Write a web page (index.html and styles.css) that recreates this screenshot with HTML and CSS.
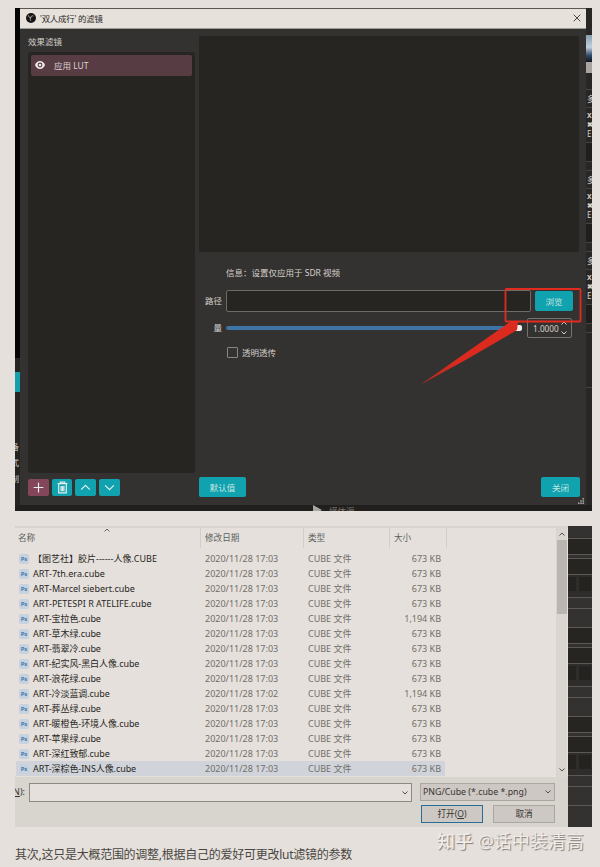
FILE: index.html
```
<!DOCTYPE html>
<html lang="zh-CN">
<head>
<meta charset="utf-8">
<title>滤镜</title>
<link rel="stylesheet" href="styles.css">
</head>
<body>
<main class="page">
  <section class="shot shot-obs">
    <div class="edge-left">
      <div class="edge-black"></div>
      <div class="edge-teal"></div>
      <div class="edge-words"><span>备</span><span>式</span><span>制</span></div>
    </div>
    <div class="window">
      <header class="titlebar">
        <svg class="logo" viewBox="0 0 20 20"><circle cx="10" cy="10" r="10" fill="#171615"/><g fill="none" stroke="#bdb8b2" stroke-width="1.700"><path d="M5 4.500c0 3.500 2 5 5 4.500 0-3 2-4 5-3"/><path d="M10 9c-2 2-2 4-.5 6.500"/></g></svg>
        <span class="title">'双人成行' 的滤镜</span>
        <svg class="close" viewBox="0 0 8 8"><path d="M.7.7l6.600 6.600M7.300.7L.7 7.300"/></svg>
      </header>
      <div class="body">
        <aside class="left">
          <div class="heading">效果滤镜</div>
          <div class="list">
            <div class="item">
              <svg class="eye" viewBox="0 0 20 16"><path d="M0 8C4-2.500 16-2.500 20 8 16 18.500 4 18.500 0 8z" fill="#f0e8e6"/><circle cx="10" cy="8" r="4.800" fill="#573d43"/><circle cx="10" cy="8" r="2.600" fill="#f0e8e6"/></svg>
              <span>应用 LUT</span>
            </div>
          </div>
          <div class="tools">
            <div class="tool add"><svg viewBox="0 0 12 12"><path d="M6 1.500v9M1.500 6h9"/></svg></div>
            <div class="tool"><svg viewBox="0 0 12 12"><path d="M1.500 2.500h9M4 2V1h4v1M2.500 3v8h7V3M4.700 4.500v5M6 4.500v5M7.300 4.500v5"/></svg></div>
            <div class="tool"><svg viewBox="0 0 12 12"><path d="M2 8l4-4 4 4"/></svg></div>
            <div class="tool"><svg viewBox="0 0 12 12"><path d="M2 4l4 4 4-4"/></svg></div>
          </div>
        </aside>
        <div class="right">
          <div class="preview"></div>
          <div class="info">信息：设置仅应用于 SDR 视频</div>
          <div class="row path"><label>路径</label><div class="field"></div><div class="btn browse">浏览</div></div>
          <div class="row amount"><label>量</label><div class="slider"><i></i></div><div class="spin"><span>1.0000</span><svg viewBox="0 0 6 14"><path d="M.5 3.500L3 1l2.500 2.500M.5 10.500L3 13l2.500-2.500"/></svg></div></div>
          <div class="check"><i></i><span>透明透传</span></div>
          <div class="actions"><div class="btn">默认值</div><div class="btn end">关闭</div></div>
        </div>
      </div>
      <svg class="grip" viewBox="0 0 6 6"><path d="M4.500 0H6v1.500H4.500zM2.300 2.200h1.500v1.500H2.300zM4.500 2.200H6v1.500H4.500zM0 4.500h1.500V6H0zM2.300 4.500h1.500V6H2.300zM4.500 4.500H6V6H4.500z" fill="#aaa7a2"/></svg>
    </div>
    <div class="edge-right">
      <div class="thumb"></div><div class="scrap"></div>
      <div class="meter"><span>多</span><b>X</b><b>✖</b><span>E</span></div>
      <div class="meter"><span>多</span><b>X</b><b>✖</b><span>E</span></div>
      <div class="meter"><span>多</span><b>X</b><b>✖</b><span>E</span></div>
      <div class="meter last"></div>
    </div>
    <div class="edge-bottom"><i></i><span>媒体源</span></div>
    <svg class="mark" viewBox="0 0 577 503"><defs><linearGradient id="fade" x1="0" y1="1" x2="1" y2="0"><stop offset="0" stop-color="#a52c20"/><stop offset=".35" stop-color="#dc2a1f"/></linearGradient></defs><rect x="490.500" y="281" width="75" height="32.500" rx="1" fill="none" stroke="#e12a20" stroke-width="1.800"/><path d="M405 377Q452 344 495 314h8l-1 8Q455 350 405 377z" fill="url(#fade)"/></svg>
  </section>

  <section class="shot shot-files">
    <div class="dialog">
      <div class="files">
        <div class="table">
          <div class="head"><span>名称</span><span>修改日期</span><span>类型</span><span>大小</span><span></span><svg class="sort" viewBox="0 0 6 4"><path d="M.5 3.500L3 1l2.500 2.500"/></svg></div>
          <div class="rows" id="rows"></div>
        </div>
        <div class="scroll"><svg viewBox="0 0 8 6"><path d="M1.500 4.500L4 2l2.500 2.500"/></svg><i></i><svg viewBox="0 0 8 6"><path d="M1.500 1.500L4 4l2.500-2.500"/></svg></div>
      </div>
      <footer class="foot">
        <div class="name-row"><div class="n"><span><u>N</u>):</span></div><div class="input"><svg viewBox="0 0 8 6"><path d="M1.500 1.500L4 4l2.500-2.500"/></svg></div><div class="combo"><span>PNG/Cube (*.cube *.png)</span><svg viewBox="0 0 8 6"><path d="M1.500 1.500L4 4l2.500-2.500"/></svg></div></div>
        <div class="btn-row"><div class="wbtn primary">打开(<u>O</u>)</div><div class="wbtn">取消</div></div>
      </footer>
    </div>
    <div class="strip"><div class="unit"><i></i></div><div class="unit"><i></i></div><div class="unit"><i></i></div><div class="tail"></div></div>
  </section>
  <p class="caption">其次,这只是大概范围的调整,根据自己的爱好可更改lut滤镜的参数</p>
  <div class="watermark"><b>知乎</b> @话中装清高</div>
</main>
<script src="files.js"></script>
</body>
</html>
```
FILE: styles.css
```
* { box-sizing: border-box; }
body { margin: 0; background: #e5e0db; font-family: "Noto Sans", "Noto Sans CJK SC", sans-serif; }
svg { display: block; fill: none; }
.page { position: relative; width: 600px; height: 867px; padding: 8px 8px 0 15px; overflow: hidden; }
.shot { width: 577px; overflow: hidden; }

.shot-obs { position: relative; height: 503px; display: grid; grid-template: 497px 6px / 5px 566px 6px; background: #211f1e; color: #d4d1cc; font-size: 8.500px; }
.edge-left { background: #252422; overflow: hidden; }
.edge-black { height: 350px; background: #050505; }
.edge-teal { height: 20px; margin-top: 14px; background: #12a0ac; }
.edge-words { margin-top: 49px; display: grid; gap: 4px; font-size: 8px; line-height: 12px; }
.edge-words span { margin-left: -4px; }
.window { position: relative; background: #343230; border-top: 1px solid #5b5854; display: flex; flex-direction: column; }
.titlebar { height: 20px; flex: none; display: flex; align-items: center; padding: 0 5px 2px 6px; background: #e6e1db; color: #282624; border-bottom: 1px solid #999d96; }
.logo { width: 10px; height: 10px; margin-right: 4px; }
.title { font-size: 8.400px; white-space: nowrap; letter-spacing: -.2px; }
.close { width: 8px; height: 8px; margin-left: auto; stroke: #373431; stroke-width: .9; }
.body { flex: 1; display: grid; grid-template-columns: 167px 381px; gap: 4px; padding: 0 7px 0 8px; }
.left { display: flex; flex-direction: column; }
.heading { height: 23px; line-height: 25px; }
.list { height: 421px; background: #272522; border-radius: 3px; padding: 3px; }
.item { height: 21px; border-radius: 2px; background: #573d43; display: flex; align-items: center; padding: 0 0 1px 4px; gap: 9px; color: #ddd2d0; }
.eye { width: 10px; height: 8px; }
.tools { display: flex; gap: 3px; margin-top: 6px; }
.tool { width: 20.700px; height: 17px; border-radius: 2px; background: #10a2ae; display: grid; place-items: center; }
.tool.add { background: #84465a; }
.tool svg { width: 13px; height: 13px; stroke: #e3eeec; stroke-width: 1.100; }
.right { display: flex; flex-direction: column; }
.preview { height: 216px; margin: 7px 1px 0 0; background: #272522; flex: none; }
.info { margin: 14px 0 0 27px; height: 14px; line-height: 14px; }
.row { display: flex; align-items: center; }
.row label { width: 23px; margin-right: 4px; padding-bottom: 3px; text-align: right; flex: none; }
.path { height: 22px; margin-top: 10px; }
.field { width: 305px; height: 22px; border: 1px solid #6d6b67; border-radius: 2px; background: #272522; }
.btn { display: grid; place-items: center; width: 47px; height: 20px; border-radius: 2px; background: #10a2ae; color: #c9e5e3; padding-bottom: 1px; }
.browse { width: 38px; margin-left: 4px; }
.amount { height: 20px; margin-top: 6px; }
.slider { width: 296px; height: 4px; background: #3d73a5; border-radius: 2px; flex: none; display: flex; justify-content: flex-end; align-items: center; }
.slider i { width: 8px; height: 6px; background: #f1eeeb; border-radius: 2px; }
.spin { width: 45px; height: 20px; margin-left: 5px; border: 1px solid #777470; border-radius: 2px; display: flex; align-items: center; justify-content: space-between; padding: 0 4px 0 5px; }
.spin span { font-size: 8.200px; }
.spin svg { width: 6px; height: 14px; stroke: #d4d1cc; }
.check { height: 12px; margin: 8px 0 0 28px; display: flex; align-items: center; gap: 4px; }
.check i { width: 11px; height: 11px; border: 1px solid #898681; border-radius: 1px; }
.actions { margin-top: 119px; display: flex; justify-content: space-between; }
.btn.end { width: 39px; }
.grip { position: absolute; right: 2px; bottom: 1px; width: 6px; height: 6px; }
.edge-right { background: #292725; overflow: hidden; padding-top: 27px; }
.thumb { height: 27px; background: linear-gradient(#879fab, #c1d0df 45%, #344c66 75%, #10151d); }
.scrap { height: 11px; margin-bottom: 16px; background: #aaa4a0; }
.meter { height: 81px; padding: 4px 0 0 1px; border-top: 1px solid #45423f; background: linear-gradient(#292725 17px, #45423f 17px 18px, #292725 18px 52px, #45423f 52px 53px, #201e1d 53px 71px, #45423f 71px 72px, #292725 72px); font-size: 8px; line-height: 9px; display: grid; align-content: start; }
.meter span:first-child { margin-bottom: 8px; }
.meter b { font-size: 7px; }
.meter.last { height: 56px; background: #292725; border-bottom: 1px solid #45423f; }
.edge-bottom { grid-column: 1 / -1; height: 6px; overflow: hidden; display: flex; padding-left: 298px; font-size: 8.500px; line-height: 12px; color: #777470; background: #211f1e; }
.edge-bottom i { border: 5px solid transparent; border-left: 9px solid #aaa7a2; margin-right: 2px; height: 10px; }
.mark { position: absolute; left: 0; top: 0; width: 577px; height: 503px; }

.shot-files { height: 301px; margin-top: 15px; display: grid; grid-template-columns: 553px 24px; font-size: 9px; }
.dialog { display: flex; flex-direction: column; border-top: 2px solid #d8d4ce; }
.files { height: 249px; display: flex; }
.table { width: 541px; }
.head { position: relative; height: 20px; display: grid; grid-template-columns: 185px 103px 86px 57px 1fr; color: #5b5f63; font-size: 8.600px; line-height: 20px; }
.head span { padding-left: 4px; border-left: 1px solid #d2cec9; }
.head span:first-child { padding-left: 3px; border: 0; }
.sort { position: absolute; left: 89px; top: 0; width: 6px; height: 4px; stroke: #66625f; }
.rows { padding-top: 3px; }
.file { height: 15px; width: 429px; margin-left: 1px; display: grid; grid-template-columns: 16px 173px 103px 75px 58px; align-items: center; line-height: 15px; white-space: nowrap; color: #716e6a; }
.file.hot { background: #d0d4da; }
.ps { width: 10px; height: 10px; margin-left: 3px; background: #c6d2df; border-radius: 2px; color: #477aab; font: bold 6px/10px "Noto Sans"; text-align: center; }
.fname { color: #282624; padding-left: 1px; }
.fname.cjk { letter-spacing: -.08px; }
.kb { text-align: right; }
.scroll { width: 11px; background: #d9d5cf; display: flex; flex-direction: column; align-items: center; padding: 3px 0; }
.scroll svg, .input svg, .combo svg { width: 8px; height: 6px; stroke: #514e4b; flex: none; }
.scroll i { width: 10px; height: 74px; margin-top: 3px; background: #b9b5b0; }
.scroll svg:last-child { margin-top: auto; margin-bottom: 1px; }
.foot { height: 50px; background: #d8d4ce; padding: 6px 13px 0 0; color: #373431; }
.name-row { display: flex; height: 19px; }
.n { width: 14px; overflow: hidden; display: flex; justify-content: flex-end; padding-right: 4px; line-height: 18px; }
.input { width: 383px; height: 19px; border: 1px solid #8d8a85; background: #e5e0db; display: flex; align-items: center; justify-content: flex-end; padding-right: 2px; }
.combo { width: 135px; height: 18px; margin-left: 8px; border: 1px solid #aaa6a1; background: #cdc8c3; display: flex; align-items: center; justify-content: space-between; padding: 0 2px; white-space: nowrap; font-size: 8.800px; }
.btn-row { display: flex; justify-content: flex-end; gap: 10px; margin-top: 3px; }
.wbtn { width: 62px; height: 18px; background: #cdc8c3; border: 1px solid #aaa6a1; text-align: center; line-height: 16px; font-size: 8.600px; }
.wbtn.primary { border: 1px solid #286c98; }
.strip { background: #343230; overflow: hidden; padding-top: 12px; }
.unit { height: 89px; border-top: 1px solid #5c5955; background: linear-gradient(#272522 15px, #5c5955 15px 16px, #343230 16px 19px, #5c5955 19px 20px, #272522 20px 35px, #5c5955 35px 36px, #2f2d2b 36px 58px, #5c5955 58px 59px, #343230 59px 69px, #5c5955 69px 70px, #343230 70px); padding-top: 38px; }
.unit i { display: block; width: 12px; height: 14px; margin-left: 11px; background: #242320; box-shadow: -15px 0 #242320; }
.tail { border-top: 1px solid #5c5955; }

.caption { margin: 18px 0 0; font-size: 12px; line-height: 19px; letter-spacing: -.26px; color: #494642; white-space: nowrap; }
.watermark { position: absolute; left: 437px; top: 829px; font-size: 18px; line-height: 24px; color: #efebe8; text-shadow: 1px 1px 1px #827e7a; white-space: nowrap; }
.watermark b { font-weight: 500; }
```
FILE: files.js
```
const names = [
  "【图艺社】胶片------人像.CUBE", "ART-7th.era.cube", "ART-Marcel siebert.cube",
  "ART-PETESPI R ATELIFE.cube", "ART-宝拉色.cube", "ART-草木绿.cube", "ART-翡翠冷.cube",
  "ART-纪实风-黑白人像.cube", "ART-浪花绿.cube", "ART-冷淡蓝调.cube", "ART-葬丛绿.cube",
  "ART-暖橙色-环境人像.cube", "ART-苹果绿.cube", "ART-深红致郁.cube", "ART-深棕色-INS人像.cube"
];
document.getElementById("rows").innerHTML = names.map((name, i) => `
  <div class="file${i === names.length - 1 ? " hot" : ""}">
    <span class="ps">Ps</span><span class="fname${i > 3 ? " cjk" : ""}">${name}</span>
    <span class="date">2020/11/28 17:0${i === 9 ? 2 : 3}</span><span>CUBE 文件</span>
    <span class="kb">${i === 4 || i === 9 ? "1,194" : "673"} KB</span>
  </div>`).join("");
```
